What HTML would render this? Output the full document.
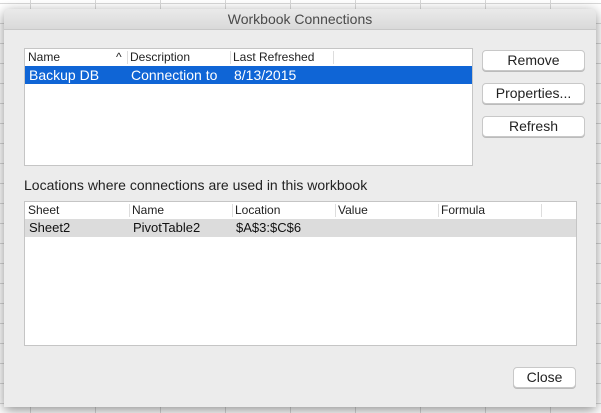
<!DOCTYPE html><html><head><style>
body{margin:0;width:601px;height:413px;overflow:hidden;background:#fff;font-family:"Liberation Sans",sans-serif;position:relative;
background-image:linear-gradient(#d8d8d8 1px,transparent 1px),linear-gradient(90deg,#d8d8d8 1px,transparent 1px);background-size:65px 20px;background-position:-35px 3px}
.dlg{position:absolute;left:4px;top:9px;width:592px;height:398px;background:#ececec;border-radius:5px 5px 0 0;box-shadow:0 3px 12px rgba(0,0,0,.45);overflow:hidden}
.tb{height:20px;background:linear-gradient(#eaeaea,#d9d9d9);border-bottom:1px solid #c8c8c8;text-align:center;font-size:14px;line-height:20px;color:#4a4a4a}
.list{position:absolute;background:#fff;border:1px solid #c5c5c5}
.hd{height:17px;font-size:12px;line-height:17px;color:#222;position:relative}
.c{position:absolute;top:0;padding-left:3px;white-space:nowrap}
.sep{position:absolute;top:2px;width:1px;height:13px;background:#ddd}
.row{position:absolute;left:0;right:0;height:18px;font-size:14px;line-height:18px}
.btn{position:absolute;left:478px;width:101px;height:19px;background:#fff;border:1px solid #c8c8c8;border-radius:4px;font-size:14px;text-align:center;line-height:19px;color:#222;box-shadow:0 1px 0 #bbb}
</style></head><body>
<div class="dlg">
<div class="tb">Workbook Connections</div>
<div class="list" style="left:20px;top:39px;width:447px;height:116px">
 <div class="hd"><span class="c" style="left:0">Name</span><span class="c" style="left:88px">^</span><span class="sep" style="left:102px"></span><span class="c" style="left:102px">Description</span><span class="sep" style="left:205px"></span><span class="c" style="left:205px">Last Refreshed</span><span class="sep" style="left:308px"></span></div>
 <div class="row" style="top:17px;background:#0f65d6;color:#fff"><span class="c" style="left:1px">Backup DB</span><span class="c" style="left:103px">Connection to</span><span class="c" style="left:206px">8/13/2015</span></div>
</div>
<div class="btn" style="top:41px">Remove</div>
<div class="btn" style="top:74px">Properties...</div>
<div class="btn" style="top:107px">Refresh</div>
<div style="position:absolute;left:20px;top:168px;font-size:14px;color:#222">Locations where connections are used in this workbook</div>
<div class="list" style="left:20px;top:192px;width:551px;height:143px">
 <div class="hd"><span class="c" style="left:0">Sheet</span><span class="sep" style="left:104px"></span><span class="c" style="left:104px">Name</span><span class="sep" style="left:207px"></span><span class="c" style="left:207px">Location</span><span class="sep" style="left:310px"></span><span class="c" style="left:310px">Value</span><span class="sep" style="left:413px"></span><span class="c" style="left:413px">Formula</span><span class="sep" style="left:516px"></span></div>
 <div class="row" style="top:17px;background:#dcdcdc;color:#111;font-size:13px"><span class="c" style="left:1px">Sheet2</span><span class="c" style="left:105px">PivotTable2</span><span class="c" style="left:208px">$A$3:$C$6</span></div>
</div>
<div class="btn" style="left:509px;width:61px;top:358px">Close</div>
</div>
</body></html>
